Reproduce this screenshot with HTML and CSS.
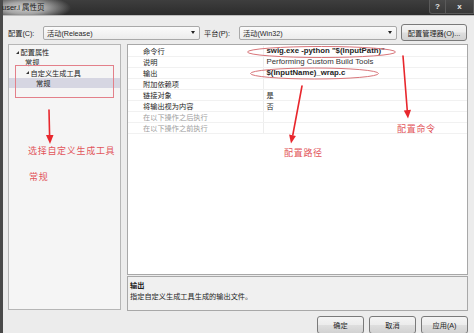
FILE: index.html
```html
<!DOCTYPE html>
<html lang="zh-CN">
<head>
<meta charset="utf-8">
<title>user.i 属性页</title>
<link rel="stylesheet" href="styles.css">
</head>
<body>
<div class="window">
  <div class="titlebar">
    <span class="title">user.i 属性页</span>
    <div class="caption-btns">
      <span class="cbtn help">?</span>
      <span class="cbtn close">x</span>
    </div>
  </div>
  <div class="content">
    <div class="toolbar">
      <span class="lbl lbl1">配置(C):</span>
      <div class="combo combo1"><span>活动(Release)</span><i class="arrow"></i></div>
      <span class="lbl lbl2">平台(P):</span>
      <div class="combo combo2"><span>活动(Win32)</span><i class="arrow"></i></div>
      <div class="btn mgr">配置管理器(O)...</div>
    </div>
    <div class="main">
      <div class="tree">
        <div class="node l0"><i class="tri"></i>配置属性</div>
        <div class="node l1leaf">常规</div>
        <div class="node l1"><i class="tri"></i>自定义生成工具</div>
        <div class="node l2leaf sel">常规</div>
      </div>
      <div class="right">
        <div class="grid">
          <div class="row"><span class="name">命令行</span><span class="val bold">swig.exe -python "$(InputPath)"</span></div>
          <div class="row"><span class="name">说明</span><span class="val lat">Performing Custom Build Tools</span></div>
          <div class="row"><span class="name">输出</span><span class="val bold">$(InputName)_wrap.c</span></div>
          <div class="row"><span class="name">附加依赖项</span><span class="val"></span></div>
          <div class="row"><span class="name">链接对象</span><span class="val">是</span></div>
          <div class="row"><span class="name">将输出视为内容</span><span class="val">否</span></div>
          <div class="row dis"><span class="name">在以下操作之后执行</span><span class="val"></span></div>
          <div class="row dis"><span class="name">在以下操作之前执行</span><span class="val"></span></div>
        </div>
        <div class="desc">
          <div class="dt">输出</div>
          <div class="dd">指定自定义生成工具生成的输出文件。</div>
        </div>
      </div>
    </div>
    <div class="footer">
      <div class="btn fbtn">确定</div>
      <div class="btn fbtn">取消</div>
      <div class="btn fbtn">应用(A)</div>
    </div>
  </div>
</div>

<svg class="overlay" width="474" height="333" viewBox="0 0 474 333">
  <rect x="15.5" y="65.5" width="98" height="32" fill="none" stroke="#e3808a" stroke-width="1"/>
  <ellipse cx="321.5" cy="52" rx="74" ry="5.5" fill="none" stroke="#d8757a" stroke-width="1"/>
  <ellipse cx="314.5" cy="73.5" rx="64" ry="5.5" fill="none" stroke="#d8757a" stroke-width="1"/>
  <g stroke="#e8272d" stroke-width="1.6" fill="#e8272d" stroke-linecap="round">
    <line x1="49" y1="110" x2="49.6" y2="136"/>
    <polygon points="46,135 53.5,135 50,144" stroke="none"/>
    <line x1="403" y1="56" x2="407.3" y2="111"/>
    <polygon points="403.8,110.5 411,109.8 408,118.5" stroke="none"/>
    <line x1="302" y1="86" x2="292.8" y2="135"/>
    <polygon points="295.9,136 289.1,134.5 291,143.5" stroke="none"/>
  </g>
</svg>
<div class="note n1">选择自定义生成工具</div>
<div class="note n2">常规</div>
<div class="note n3">配置命令</div>
<div class="note n4">配置路径</div>
</body>
</html>
```
FILE: styles.css
```css
* { box-sizing: border-box; margin: 0; padding: 0; }
html, body { width: 474px; height: 333px; overflow: hidden; }
body {
  position: relative;
  font-family: "Liberation Sans", "Noto Sans CJK SC", sans-serif;
  font-size: 7.2px;
  color: #1e1e1e;
  background: #ececec;
}
.window {
  width: 474px;
  height: 333px;
  display: flex;
  flex-direction: column;
  border-left: 3px solid #4a4a4a;
  background: #ececec;
}
.titlebar {
  height: 16px;
  flex: none;
  display: flex;
  justify-content: space-between;
  background:
    radial-gradient(ellipse 46px 13px at 22px 8px, rgba(205,205,205,1) 0%, rgba(185,185,185,.85) 45%, rgba(160,160,160,0) 100%),
    linear-gradient(#3e3e3e, #2c2c2c);
  border-bottom: 1px solid #bdbdbd;
}
.title {
  margin-left: -1px;
  font-size: 7.5px;
  line-height: 16px;
  color: #181818;
}
.caption-btns { display: flex; height: 14px; }
.cbtn {
  display: flex;
  align-items: center;
  justify-content: center;
  color: #e6e6e6;
  font-weight: bold;
  font-size: 8px;
  border: 1px solid #5a5a5a;
  border-top: none;
  background: linear-gradient(#4a4a4a, #383838);
}
.help { width: 17px; border-radius: 0 0 0 3px; }
.close { width: 28px; border-left: none; }

.content {
  flex: 1;
  display: flex;
  flex-direction: column;
  padding: 0 6px 0 5px;
}
.toolbar {
  margin-top: 8px;
  height: 17px;
  display: flex;
  align-items: center;
}
.lbl { width: 35px; white-space: nowrap; }
.lbl2 { margin-left: 4px; }
.combo {
  height: 14px;
  display: flex;
  align-items: center;
  justify-content: space-between;
  padding: 0 4px 0 3px;
  border: 1px solid #a9a9a9;
  border-radius: 2px;
  background: linear-gradient(#fbfbfb, #ececec);
}
.combo1 { width: 157px; }
.combo2 { width: 158px; }
.arrow {
  width: 0; height: 0;
  border-left: 2.5px solid transparent;
  border-right: 2.5px solid transparent;
  border-top: 3px solid #222;
}
.btn {
  display: flex;
  align-items: center;
  justify-content: center;
  border: 1px solid #7a7a7a;
  border-radius: 3px;
  background: linear-gradient(#f4f4f4 0%, #ececec 48%, #dedede 52%, #d2d2d2 100%);
  white-space: nowrap;
}
.mgr { margin-left: 4px; width: 66px; height: 17px; }

.main {
  margin-top: 3px;
  height: 267px;
  display: flex;
  gap: 6px;
}
.tree {
  width: 113px;
  height: 266px;
  border: 1px solid #b6b6b6;
  background: #f5f5f5;
  padding-top: 2px;
}
.node {
  height: 10.3px;
  display: flex;
  align-items: center;
  white-space: nowrap;
}
.tri {
  width: 0; height: 0;
  border-left: 3.5px solid transparent;
  border-bottom: 3.5px solid #333;
  margin-right: 1.5px;
}
.l0 { padding-left: 7px; }
.l1leaf { padding-left: 16px; }
.l1 { padding-left: 17px; }
.l2leaf { padding-left: 27px; }
.sel { background: #d6d6e2; }

.right { flex: 1; display: flex; flex-direction: column; }
.grid {
  height: 231px;
  border: 1px solid #a8a8a8;
  background: #fff;
  padding-top: 0.5px;
}
.row {
  height: 11px;
  display: grid;
  grid-template-columns: 135px 1fr;
  align-items: stretch;
  border-bottom: 1px solid #f1f1f1;
}
.row span { display: flex; align-items: center; white-space: nowrap; }
.name { padding-left: 15px; }
.val { padding-left: 2.5px; border-left: 1px solid #ededed; }
.bold { font-weight: bold; font-size: 7.8px; }
.lat { font-size: 7.8px; color: #333; }
.dis { color: #a0a0a0; }

.desc {
  margin-top: 1px;
  height: 35px;
  border: 1px solid #a8a8a8;
  background: #f0f0f0;
  padding: 3px 0 0 2px;
  line-height: 11px;
}
.dt { font-weight: bold; }

.footer {
  margin-top: 5px;
  display: flex;
  justify-content: flex-end;
  gap: 5px;
}
.fbtn { width: 47px; height: 18px; }

.overlay { position: absolute; left: 0; top: 0; pointer-events: none; }
.note {
  position: absolute;
  font-family: "Noto Sans CJK SC", sans-serif;
  font-size: 9px;
  line-height: 12px;
  letter-spacing: 0.7px;
  color: #e2555b;
  white-space: nowrap;
}
.n1 { left: 28px; top: 145px; }
.n2 { left: 29px; top: 171px; }
.n3 { left: 397px; top: 123px; }
.n4 { left: 284px; top: 147px; }
```
